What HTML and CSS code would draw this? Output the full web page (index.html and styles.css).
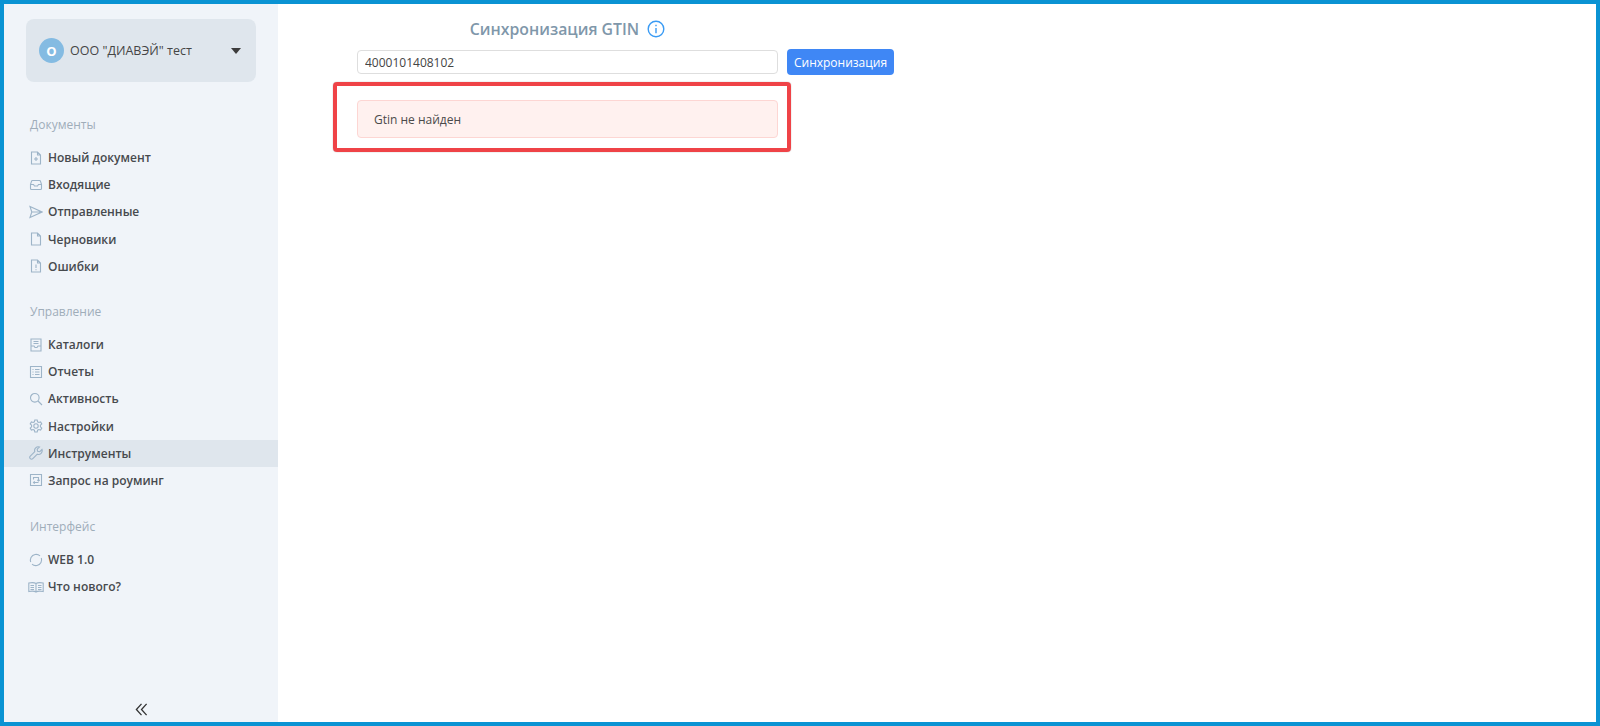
FILE: index.html
```html
<!DOCTYPE html>
<html lang="ru">
<head>
<meta charset="utf-8">
<title>Синхронизация GTIN</title>
<link rel="stylesheet" href="styles.css">
</head>
<body>
<div class="app">
  <aside class="sidebar">
    <div class="org">
      <span class="avatar">О</span>
      <span class="org-name">ООО "ДИАВЭЙ" тест</span>
      <span class="caret"></span>
    </div>
    <div class="group group-first">
      <div class="group-title">Документы</div>
      <a class="item"><svg class="ic" viewBox="0 0 14 14"><path d="M2.500 1h6l3 3v9h-9zM8.500 1v3h3M7 6v4M5 8h4"/></svg>Новый документ</a>
      <a class="item"><svg class="ic" viewBox="0 0 14 14"><path d="M3.500 2.500h7a1 1 0 0 1 1 .8l1 3v4.200a1 1 0 0 1-1 1h-9a1 1 0 0 1-1-1V6.300l1-3a1 1 0 0 1 1-.8zM1.500 6.500h3l1 1.500h3l1-1.500h3"/></svg>Входящие</a>
      <a class="item"><svg class="ic" viewBox="0 0 14 14"><path d="M1 1.500 13 7 1 12.500 2.800 7zM2.800 7H13"/></svg>Отправленные</a>
      <a class="item"><svg class="ic" viewBox="0 0 14 14"><path d="M2.500 1h6l3 3v9h-9zM8.500 1v3h3"/></svg>Черновики</a>
      <a class="item"><svg class="ic" viewBox="0 0 14 14"><path d="M2.500 1h6l3 3v9h-9zM8.500 1v3h3M7 5.500v3.500M7 10.200v1"/></svg>Ошибки</a>
    </div>
    <div class="group">
      <div class="group-title">Управление</div>
      <a class="item"><svg class="ic" viewBox="0 0 14 14"><path d="M2 1h10v12H2zM4.500 3.500h5M4.500 5.500h5M2 8h3l1 1.500h2L9 8h3"/></svg>Каталоги</a>
      <a class="item"><svg class="ic" viewBox="0 0 14 14"><path d="M1.500 1.500h11v11h-11zM6 4.500h4.500M6 7h4.500M6 9.500h4.500M3.500 4.500h1M3.500 7h1M3.500 9.500h1"/></svg>Отчеты</a>
      <a class="item"><svg class="ic" viewBox="0 0 14 14"><circle cx="5.800" cy="5.800" r="4.300"/><path d="m9 9 4 4"/></svg>Активность</a>
      <a class="item"><svg class="ic" viewBox="0 0 14 14"><circle cx="7" cy="7" r="2.200"/><path d="M5.800 1h2.400l.4 1.800 1.200.7 1.800-.6 1.200 2.100-1.400 1.200v1.600l1.400 1.200-1.200 2.100-1.800-.6-1.200.7-.4 1.800H5.800l-.4-1.800-1.200-.7-1.800.6-1.200-2.100 1.400-1.200V6.200L1.200 5l1.200-2.100 1.800.6 1.200-.7z"/></svg>Настройки</a>
      <a class="item active"><svg class="ic" viewBox="0 0 14 14"><path d="M13 3.500 10.800 5.700 8.600 5.300 8.200 3.200 10.500 1a3.700 3.700 0 0 0-4.700 4.700L1.300 10.200a1.700 1.700 0 0 0 2.500 2.500l4.500-4.500A3.700 3.700 0 0 0 13 3.500z"/></svg>Инструменты</a>
      <a class="item"><svg class="ic" viewBox="0 0 14 14"><path d="M1.500 1.500h11v11h-11zM4.500 6.500V4.500h5V8M8.300 6.800 9.500 8l1.200-1.200M9.500 9.500h-5M5.700 8.300 4.500 9.500l1.200 1.200"/></svg>Запрос на роуминг</a>
    </div>
    <div class="group group-last">
      <div class="group-title">Интерфейс</div>
      <a class="item"><svg class="ic" viewBox="0 0 14 14"><path d="M2 4.500A5.800 5.800 0 0 1 11 2.800M12.300 5a5.800 5.800 0 0 1-.3 4.500M12 9.500A5.800 5.800 0 0 1 3 11.200M1.700 9a5.800 5.800 0 0 1 .3-4.500"/></svg>WEB 1.0</a>
      <a class="item"><svg class="ic ic-wide" viewBox="0 0 16 14"><path d="M8 3.500C6.500 2.500 3.500 2.500.8 3v8.500c2.700-.5 5.700-.5 7.200.5 1.500-1 4.500-1 7.200-.5V3C12.500 2.500 9.500 2.500 8 3.500zM8 3.500V12M2.500 5.500h3.500M2.500 7.500h3.500M2.500 9.500h3.500M10 5.500h3.500M10 7.500h3.500M10 9.500h3.500"/></svg>Что нового?</a>
    </div>
    <button class="collapse" aria-label="Свернуть"><svg viewBox="0 0 14 14"><path d="M7 1 1.500 7 7 13M12.500 1 7 7l5.500 6"/></svg></button>
  </aside>
  <main class="main">
    <section class="sync">
      <h1 class="title">Синхронизация GTIN
        <svg class="info" viewBox="0 0 18 18"><circle cx="9" cy="9" r="7.800"/><path d="M9 8v5.200M9 4.700v1.600"/></svg>
      </h1>
      <div class="form">
        <input class="input" type="text" value="4000101408102">
        <button class="btn">Синхронизация</button>
      </div>
      <div class="alert">Gtin не найден</div>
    </section>
    <div class="highlight"></div>
  </main>
</div>
</body>
</html>
```
FILE: styles.css
```css
* { box-sizing: border-box; }
html, body { height: 100%; }
body {
  margin: 0;
  font-family: "Open Sans", "Noto Sans", sans-serif;
  color: #4a4a4a;
  background: #fff;
}
.app {
  display: flex;
  height: 726px;
  border: 4px solid #0a93d3;
  overflow: hidden;
}
.sidebar {
  position: relative;
  flex: 0 0 274px;
  background: #f0f4f9;
  display: flex;
  flex-direction: column;
  padding-top: 15px;
}
.org {
  display: flex;
  align-items: center;
  height: 63px;
  margin: 0 22px 0 22px;
  padding: 0 15px 0 13px;
  background: #dfe6ed;
  border-radius: 8px;
}
.avatar {
  flex: none;
  width: 25px;
  height: 25px;
  border-radius: 50%;
  background: #84bbe2;
  color: #fff;
  display: flex;
  align-items: center;
  justify-content: center;
  font-size: 13px;
  font-weight: 700;
}
.org-name {
  flex: 1;
  margin-left: 6px;
  font-size: 12.500px;
  font-weight: 500;
  color: #454545;
  white-space: nowrap;
}
.caret {
  width: 0;
  height: 0;
  border-left: 5.500px solid transparent;
  border-right: 5.500px solid transparent;
  border-top: 6px solid #3c3c3c;
}
.group { margin-top: 22px; }
.group-first { margin-top: 33px; }
.group-last { margin-top: 23px; }
.group-title {
  height: 20px;
  line-height: 20px;
  padding-left: 26px;
  margin-bottom: 9px;
  font-size: 12px;
  color: #9fadb9;
}
.item {
  display: flex;
  align-items: center;
  height: 27.200px;
  padding-left: 25px;
  font-size: 12px;
  font-weight: 550;
  color: #474a4e;
  white-space: nowrap;
}
.item.active { background: #dfe6ed; }
.ic {
  flex: none;
  width: 14px;
  height: 14px;
  margin-right: 5px;
  fill: none;
  stroke: #9db4c8;
  stroke-width: 1.100;
}
.ic-wide { width: 16px; margin-left: -1px; margin-right: 4px; }
.collapse {
  position: absolute;
  left: 131px;
  bottom: 6px;
  width: 13px;
  height: 13px;
  padding: 0;
  border: 0;
  background: none;
  display: flex;
}
.collapse svg {
  width: 13px;
  height: 13px;
  fill: none;
  stroke: #333;
  stroke-width: 1.400;
}
.main {
  position: relative;
  flex: 1;
  background: #fff;
}
.sync {
  width: 537px;
  padding: 12px 0 0 79px;
}
.title {
  width: 421px;
  height: 26px;
  margin: 0 0 7px;
  display: flex;
  align-items: center;
  justify-content: center;
  gap: 8px;
  font-size: 15.800px;
  line-height: 26px;
  font-weight: 600;
  color: #7f97aa;
  white-space: nowrap;
}
.info {
  width: 18px;
  height: 18px;
  fill: none;
  stroke: #3a9bf4;
  stroke-width: 1.400;
}
.form {
  display: flex;
  align-items: center;
  gap: 9px;
}
.input {
  flex: 0 0 421px;
  height: 24px;
  padding: 0 7px;
  border: 1px solid #dedede;
  border-radius: 4px;
  font: 12px "Open Sans", "Noto Sans", sans-serif;
  color: #444;
  outline: none;
}
.btn {
  flex: none;
  width: 107px;
  height: 26px;
  padding: 0;
  border: 0;
  border-radius: 4px;
  background: #3f87f5;
  color: #fff;
  font: 12px "Open Sans", "Noto Sans", sans-serif;
}
.alert {
  width: 421px;
  height: 38px;
  margin-top: 25px;
  padding-left: 16px;
  display: flex;
  align-items: center;
  background: #fff1ef;
  border: 1px solid #fdd6d3;
  border-radius: 4px;
  font-size: 12px;
  color: #4a4a4a;
}
.highlight {
  position: absolute;
  left: 55px;
  top: 78px;
  width: 458px;
  height: 70px;
  border: 4px solid #ef4347;
  border-radius: 4px;
  box-shadow: 0 0 1px rgba(0, 0, 0, .5);
}
```
